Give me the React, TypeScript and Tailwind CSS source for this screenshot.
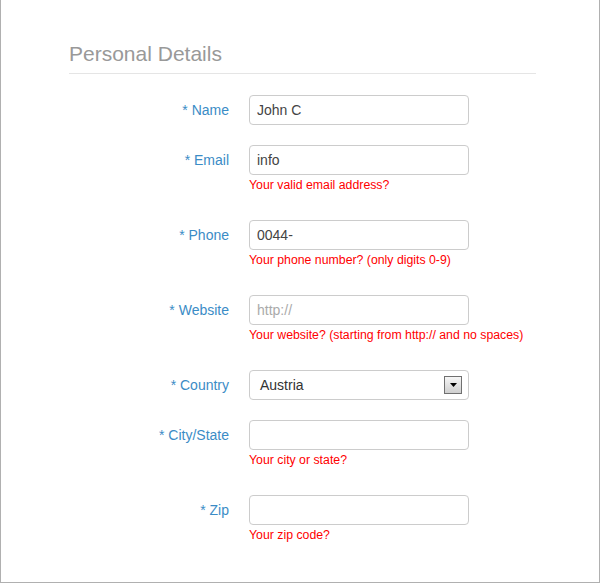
import React from "react";

type Field = {
  label: string;
  value?: string;
  placeholder?: string;
  error?: string;
  select?: boolean;
};

const FIELDS: Field[] = [
  { label: "* Name", value: "John C" },
  { label: "* Email", value: "info", error: "Your valid email address?" },
  { label: "* Phone", value: "0044-", error: "Your phone number? (only digits 0-9)" },
  {
    label: "* Website",
    placeholder: "http://",
    error: "Your website? (starting from http:// and no spaces)",
  },
  { label: "* Country", value: "Austria", select: true },
  { label: "* City/State", value: "", error: "Your city or state?" },
  { label: "* Zip", value: "", error: "Your zip code?" },
];

function SelectBox({ value }: { value: string }) {
  return (
    <div className="flex h-[30px] w-[220px] items-center justify-between rounded-[4px] border border-[#cccccc] bg-white pl-[10px] pr-[6px] text-[14px] text-[#333]">
      <span>{value}</span>
      {/* old-style dropdown button */}
      <span className="flex h-[18px] w-[18px] items-center justify-center border border-[#707070] bg-gradient-to-b from-[#f6f6f6] to-[#cfcfcf]">
        <svg width="7" height="4" viewBox="0 0 7 4">
          <path d="M0 0h7L3.5 4z" fill="#000" />
        </svg>
      </span>
    </div>
  );
}

export default function App() {
  return (
    <div
      className="h-[583px] w-[600px] overflow-hidden border-x border-b border-[#b0b0b0] bg-white pt-[39px]"
      style={{ fontFamily: '"Liberation Sans", Arial, sans-serif' }}
    >
      <div className="ml-[68px] w-[467px]">
        {/* Header */}
        <h2 className="border-b border-[#e5e5e5] pb-[4px] text-[21px] leading-[30px] text-[#999999]">
          Personal Details
        </h2>

        {/* Form rows */}
        <div className="mt-[21px] flex flex-col">
          {FIELDS.map((f) => (
            <div key={f.label} className="mb-[20px] flex">
              <label className="w-[160px] text-right text-[14px] leading-[30px] text-[#3b8cc6]">
                {f.label}
              </label>
              <div className="ml-[20px] flex flex-col">
                {f.select ? (
                  <SelectBox value={f.value ?? ""} />
                ) : (
                  <input
                    readOnly
                    value={f.value ?? ""}
                    placeholder={f.placeholder}
                    className="h-[30px] w-[220px] rounded-[4px] border border-[#cccccc] bg-white pl-[7px] text-[14px] text-[#444] outline-none placeholder:text-[#aaaaaa]"
                  />
                )}
                {f.error && (
                  <div className="h-[25px] whitespace-nowrap pt-[2px] text-[12.3px] leading-[17px] text-[#ff0000]">
                    {f.error}
                  </div>
                )}
              </div>
            </div>
          ))}
        </div>
      </div>
    </div>
  );
}
